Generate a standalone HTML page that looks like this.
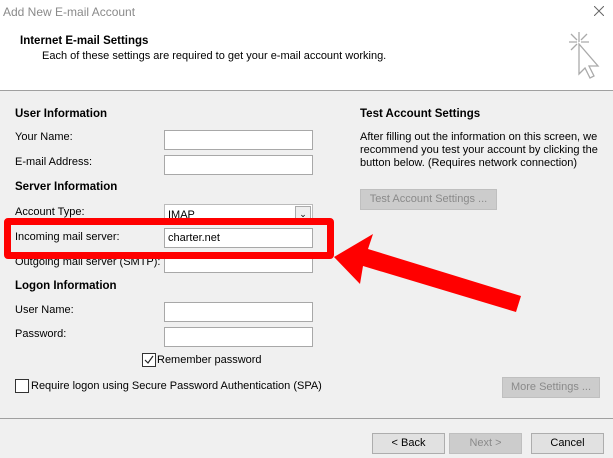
<!DOCTYPE html>
<html><head><style>
body{margin:0;width:613px;height:458px;background:#f0f0f0;font-family:"Liberation Sans",sans-serif;font-size:11px;color:#000;position:relative;overflow:hidden}
.a{position:absolute;white-space:nowrap}
.hdr{position:absolute;left:0;top:0;width:613px;height:90px;background:#fff;border-bottom:1px solid #a0a0a0}
.b{font-weight:bold;font-size:11.5px}
.in{position:absolute;left:164px;width:147px;height:18px;background:#fff;border:1px solid #a8a8a8}
.btn{position:absolute;height:19px;border:1px solid #adadad;background:#e1e1e1;text-align:center;line-height:19px;font-size:11px}
.dis{color:#8a8a8a;background:#cccccc;border-color:#bfbfbf}
.cb{position:absolute;width:12px;height:12px;border:1px solid #333;background:#fff}
</style></head><body>
<div class="hdr"></div>
<div class="a" style="left:3px;top:5px;color:#8a8a8a;font-size:12px">Add New E-mail Account</div>
<svg class="a" style="left:594px;top:6px" width="10" height="10"><path d="M0 0L10 10M10 0L0 10" stroke="#666" stroke-width="1"/></svg>
<div class="a b" style="left:20px;top:35px">Internet E-mail Settings</div>
<div class="a" style="left:42px;top:50px">Each of these settings are required to get your e-mail account working.</div>
<svg class="a" style="left:565px;top:30px" width="40" height="52" viewBox="0 0 40 52" fill="none" stroke="#aaa" stroke-width="1.3">
<path d="M14 2v10M4 12h8M16 12h8M6 4l6 6M22 4l-6 6M6 20l6-6"/>
<path d="M14 14v30l6-6 5 10 4-2-5-10h9z" fill="#fff"/>
</svg>
<div class="a b" style="left:15px;top:108px">User Information</div>
<div class="a" style="left:15px;top:131px">Your Name:</div>
<div class="in" style="top:130px"></div>
<div class="a" style="left:15px;top:156px">E-mail Address:</div>
<div class="in" style="top:155px"></div>
<div class="a b" style="left:15px;top:181px">Server Information</div>
<div class="a" style="left:15px;top:206px">Account Type:</div>
<div class="in" style="top:204px;border-color:#bbb"><span style="position:absolute;left:3px;top:4px">IMAP</span><span style="position:absolute;right:1px;top:1px;width:14px;height:15px;border:1px solid #aaa;background:#eee;font-size:9px;text-align:center;line-height:15px">⌄</span></div>
<div class="a" style="left:15px;top:231px">Incoming mail server:</div>
<div class="in" style="top:228px"><span style="position:absolute;left:3px;top:3px">charter.net</span></div>
<div class="a" style="left:15px;top:256px">Outgoing mail server (SMTP):</div>
<div class="in" style="top:253px"></div>
<div class="a b" style="left:15px;top:280px">Logon Information</div>
<div class="a" style="left:15px;top:304px">User Name:</div>
<div class="in" style="top:302px"></div>
<div class="a" style="left:15px;top:328px">Password:</div>
<div class="in" style="top:327px"></div>
<div class="cb" style="left:142px;top:353px"><svg width="12" height="12" style="position:absolute;left:0;top:0"><path d="M2 6l3 3 5-7" stroke="#222" stroke-width="1.2" fill="none"/></svg></div>
<div class="a" style="left:157px;top:354px">Remember password</div>
<div class="cb" style="left:15px;top:379px"></div>
<div class="a" style="left:31px;top:380px">Require logon using Secure Password Authentication (SPA)</div>
<div class="a b" style="left:360px;top:108px">Test Account Settings</div>
<div class="a" style="left:360px;top:131px;line-height:13px">After filling out the information on this screen, we<br>recommend you test your account by clicking the<br>button below. (Requires network connection)</div>
<div class="btn dis" style="left:360px;top:189px;width:135px">Test Account Settings ...</div>
<div class="btn dis" style="left:502px;top:377px;width:96px">More Settings ...</div>
<div style="position:absolute;left:0;top:418px;width:613px;height:1px;background:#a0a0a0"></div>
<div class="btn" style="left:372px;top:433px;width:71px">&lt; Back</div>
<div class="btn dis" style="left:449px;top:433px;width:71px">Next &gt;</div>
<div class="btn" style="left:531px;top:433px;width:71px">Cancel</div>
<div style="position:absolute;left:4px;top:218px;width:316px;height:27px;border:7px solid #f00;border-radius:4px"></div>
<svg class="a" style="left:0;top:0" width="613" height="458"><polygon points="334,257 373,234 368,249 521,296 516,312 363,266 360,284" fill="#f00"/></svg>
</body></html>
